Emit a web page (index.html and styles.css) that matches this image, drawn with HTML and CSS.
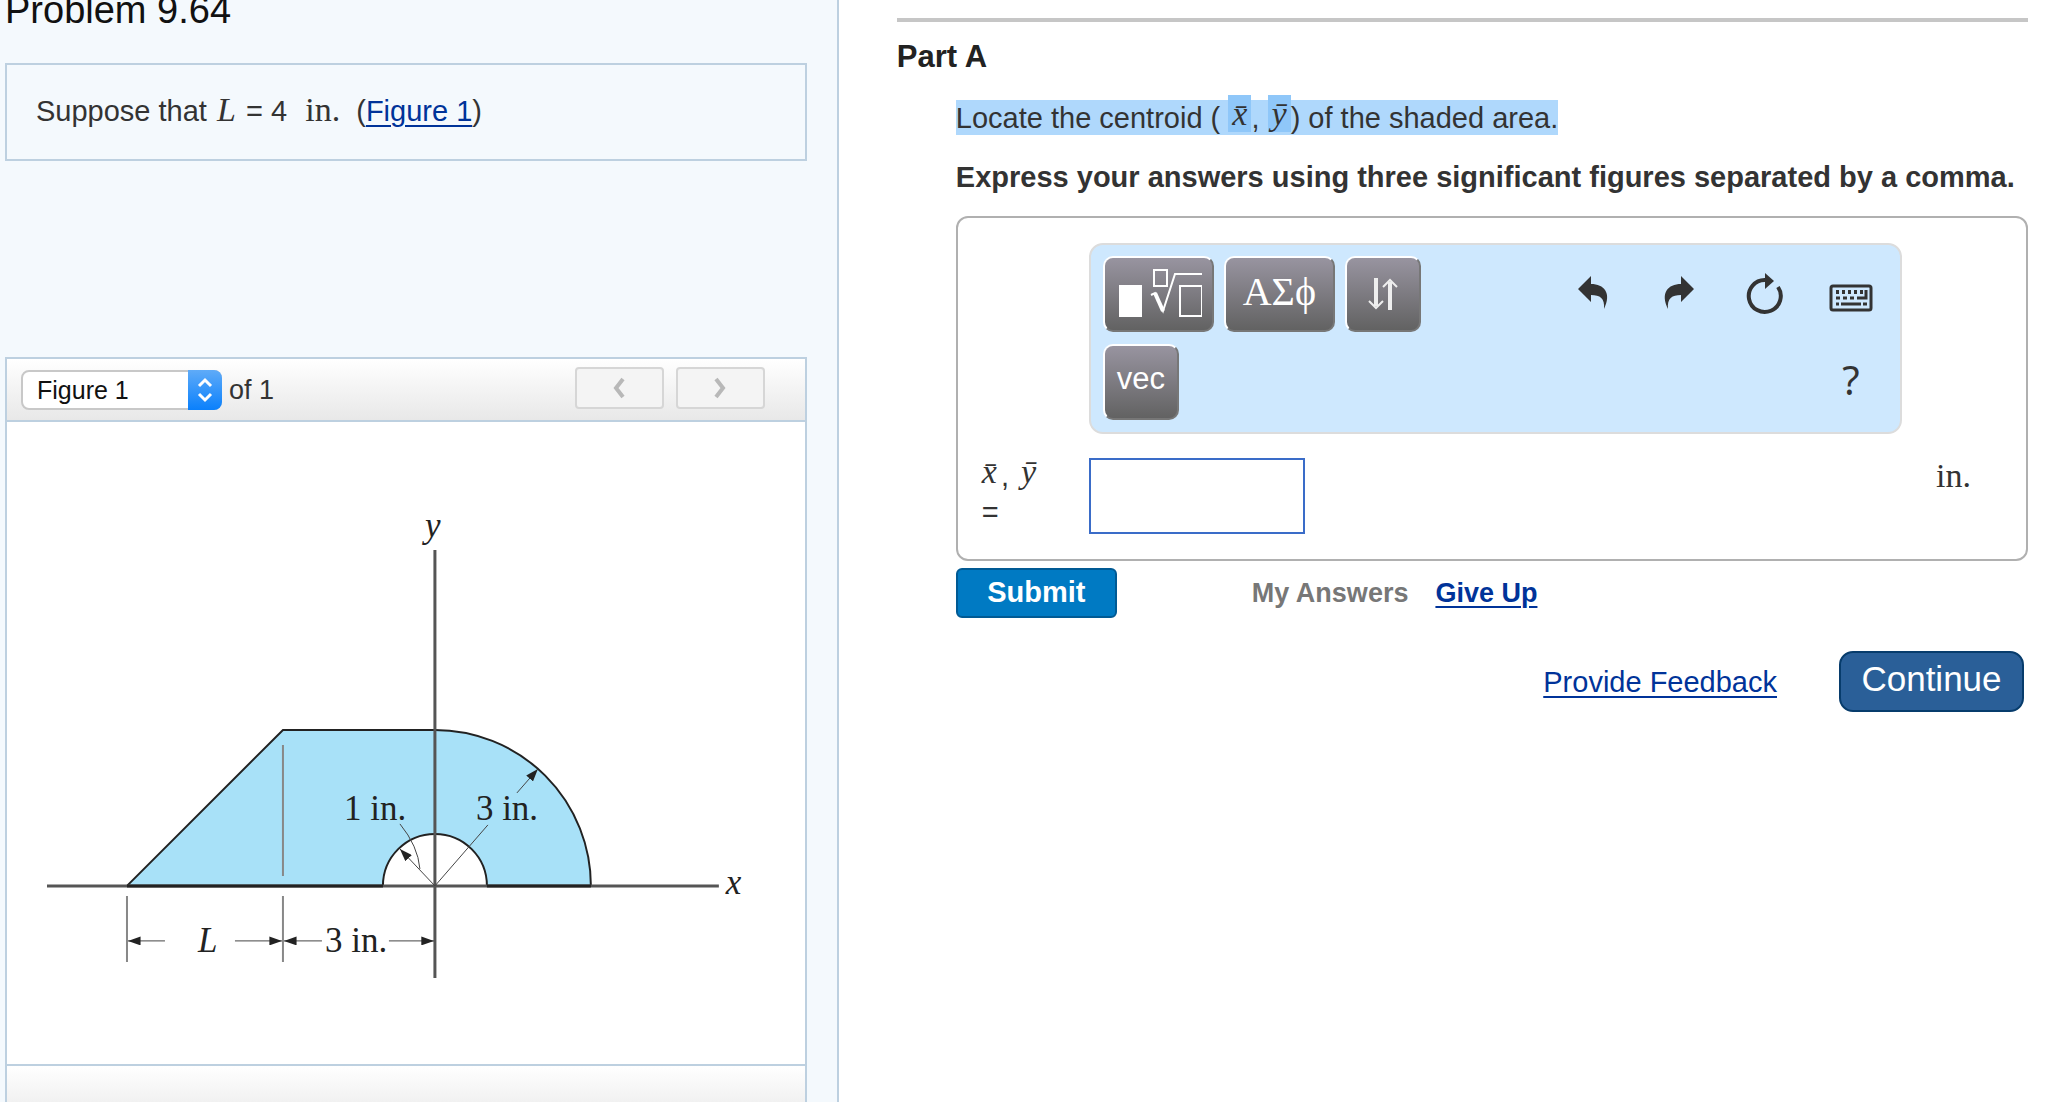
FILE: index.html
```html
<!DOCTYPE html>
<html lang="en">
<head>
    <meta charset="UTF-8">
    <meta name="viewport" content="width=device-width, initial-scale=1.0">
    <title>Problem 9.64</title>
    <link rel="stylesheet" href="styles.css">
</head>
<body>
<div class="page">

    <aside class="problem">
        <h1>Problem 9.64</h1>
        <div class="intro">
            Suppose that <i class="math">L</i> = 4&nbsp; <span class="math inches">in.</span> (<a href="#figure">Figure 1</a>)
        </div>

        <section class="figure" id="figure">
            <div class="figure-bar">
                <span class="picker">
                    <select id="figure-select" aria-label="Figure">
                        <option>Figure 1</option>
                    </select>
                    <svg class="picker-arrows" viewBox="0 0 34 40" aria-hidden="true">
                        <path d="M11 16l6-6 6 6M11 24l6 6 6-6"/>
                    </svg>
                </span>
                <label for="figure-select">of 1</label>
                <div class="pager">
                    <button type="button" aria-label="Previous figure" disabled>
                        <svg viewBox="0 0 20 24"><path d="M14 3L7 12l7 9"/></svg>
                    </button>
                    <button type="button" aria-label="Next figure" disabled>
                        <svg viewBox="0 0 20 24"><path d="M6 3l7 9-7 9"/></svg>
                    </button>
                </div>
            </div>

            <svg class="drawing" viewBox="7 422 798 642" role="img" aria-label="Shaded area with its dimensions">
                <defs>
                    <marker id="arrow" viewBox="0 0 14 10" refX="14" refY="5" markerWidth="13" markerHeight="9" markerUnits="userSpaceOnUse" orient="auto-start-reverse">
                        <path d="M0 0l14 5-14 5z" fill="#222"/>
                    </marker>
                </defs>
                <!-- shaded area -->
                <path class="area" d="M127 886L283 730H435A156 156 0 0 1 591 886H487A52 52 0 0 0 383 886Z"/>
                <!-- axes -->
                <path class="axis" d="M47 886H719M435 550V978"/>
                <path class="base" d="M127 886H383M487 886H591"/>
                <!-- guides -->
                <path class="guide" d="M283 745V876M283 896V962M127 896V962"/>
                <!-- dimensions -->
                <g class="dim">
                    <path d="M165 941H128" marker-end="url(#arrow)"/>
                    <path d="M235 941H282" marker-end="url(#arrow)"/>
                    <path d="M322 941H284" marker-end="url(#arrow)"/>
                    <path d="M389 941H434" marker-end="url(#arrow)"/>
                    <path d="M435 886L400 849" marker-end="url(#arrow)"/>
                    <path d="M517 793L538 769" marker-end="url(#arrow)"/>
                    <path d="M435 886L488 825M400 824Q418 846 420 869"/>
                </g>
                <g class="labels">
                    <text x="425" y="537" font-style="italic">y</text>
                    <text x="726" y="894" font-style="italic">x</text>
                    <text x="198" y="952" font-style="italic">L</text>
                    <text x="325" y="952">3 in.</text>
                    <text x="344" y="820">1 in.</text>
                    <text x="476" y="820">3 in.</text>
                </g>
            </svg>
            <div class="figure-foot"></div>
        </section>
    </aside>

    <main class="part">
        <h2>Part A</h2>
        <div class="content">
            <p class="question"><span class="selected">Locate the centroid ( <i class="math mean">x̄</i>, <i class="math mean">ȳ</i>) of the shaded area.</span></p>
            <p class="hint">Express your answers using three significant figures separated by a comma.</p>

            <form class="answer" id="answer-form">
                <div class="toolbar">
                    <div class="row">
                        <button type="button" class="key wide" aria-label="Templates">
                            <svg width="88" height="56" viewBox="0 0 88 56">
                                <path d="M5 19h23v32H5z" fill="#fff"/>
                                <path d="M40 4h13v16H40zM66 20h22v30H66z" fill="none" stroke="#fff" stroke-width="2"/>
                                <path d="M37 29l4-2 8 18L61 8h27" fill="none" stroke="#fff" stroke-width="2"/>
                                <path d="M41 27l8 18" stroke="#fff" stroke-width="4"/>
                            </svg>
                        </button>
                        <button type="button" class="key wide greek">ΑΣϕ</button>
                        <button type="button" class="key" aria-label="Arrows">
                            <svg width="32" height="36" viewBox="0 0 32 36" fill="none" stroke="#eee">
                                <path d="M9 2v28M23 6v28" stroke-width="4"/>
                                <path d="M2 25l7 7 7-7M16 11l7-7 7 7" stroke-width="2"/>
                            </svg>
                        </button>
                        <div class="tools">
                            <button type="button" aria-label="Undo">
                                <svg width="44" height="44" viewBox="0 0 44 44"><path d="M7 17L20 4v8c13 0 21 9 13 25 1-11-4-14-13-14v7z" fill="#333"/></svg>
                            </button>
                            <button type="button" aria-label="Redo">
                                <svg width="44" height="44" viewBox="0 0 44 44"><path d="M37 17L24 4v8C11 12 3 21 11 37c-1-11 4-14 13-14v7z" fill="#333"/></svg>
                            </button>
                            <button type="button" aria-label="Reset">
                                <svg width="44" height="44" viewBox="0 0 44 44">
                                    <path d="M35 15A16 16 0 1 1 22 8" fill="none" stroke="#333" stroke-width="4"/>
                                    <path d="M22 1l9 8-9 8z" fill="#333"/>
                                </svg>
                            </button>
                            <button type="button" aria-label="Keyboard">
                                <svg width="44" height="44" viewBox="0 0 44 44" fill="none" stroke="#333">
                                    <rect x="2" y="14" width="40" height="24" rx="2" stroke-width="3"/>
                                    <path d="M7 20h27" stroke-width="4" stroke-dasharray="3 3"/>
                                    <path d="M7 26h27" stroke-width="3" stroke-dasharray="4 3"/>
                                    <path d="M37 18v8h-5M7 32h3M12 32h20M34 32h4" stroke-width="3"/>
                                </svg>
                            </button>
                        </div>
                    </div>
                    <div class="row">
                        <button type="button" class="key">vec</button>
                        <div class="tools"><button type="button" class="help" aria-label="Help">?</button></div>
                    </div>
                </div>
                <label for="answer" class="name"><i class="math mean">x̄</i>, <i class="math mean">ȳ</i><br>=</label>
                <input type="text" id="answer">
                <span class="unit math">in.</span>
            </form>

            <div class="actions">
                <button type="submit" form="answer-form" class="submit">Submit</button>
                <span class="mine">My Answers</span>
                <a href="#">Give Up</a>
            </div>
            <div class="next">
                <a href="#">Provide Feedback</a>
                <button type="button" class="continue">Continue</button>
            </div>
        </div>
    </main>

</div>
</body>
</html>
```
FILE: styles.css
```css
* {
    box-sizing: border-box;
}

body {
    margin: 0;
    font-family: "Liberation Sans", Arial, sans-serif;
    font-size: 29px;
    line-height: 36px;
    color: #333;
    background-color: #fff;
}

button, input, select {
    font-family: inherit;
}

a {
    color: #003399;
    text-decoration-thickness: 2px;
    text-underline-offset: 4px;
}

.math {
    padding: 0 2px;
    font-family: "Liberation Serif", "Times New Roman", serif;
    font-size: 34px;
    line-height: 28px;
}

.mean {
    padding: 0 4px;
    vertical-align: 3px;
    line-height: 20px;
}

.inches {
    padding-right: 8px;
}

.page {
    display: grid;
    grid-template-columns: 41% 1fr;
    height: 100vh;
    overflow: hidden;
}

/* left side */
.problem {
    display: flex;
    flex-direction: column;
    min-height: 0;
    padding: 0 30px 0 5px;
    background-color: #f4f9fd;
    border-right: 2px solid #bdd0e0;
}

h1 {
    margin: -8px 0 35px 0;
    font-size: 38px;
    font-weight: normal;
    color: #111;
}

.intro {
    padding: 28px 29px 30px;
    margin-bottom: 196px;
    border: 2px solid #bdd0e0;
}

.figure {
    background-color: #fff;
    border: 2px solid #bdd0e0;
    border-bottom: 0;
}

.figure-bar {
    display: flex;
    align-items: center;
    gap: 7px;
    height: 63px;
    padding: 0 40px 0 14px;
    font-size: 27px;
    border-bottom: 2px solid #bdd0e0;
    background-image: linear-gradient(#fff, #e8e8e8);
}

.picker {
    position: relative;
}

.picker select {
    display: block;
    width: 201px;
    height: 40px;
    padding: 0 14px;
    appearance: none;
    font-size: 25px;
    color: #111;
    background-color: #fff;
    border: 2px solid #c8c8c8;
    border-radius: 8px;
}

.picker-arrows {
    position: absolute;
    top: 0;
    right: 0;
    width: 34px;
    height: 40px;
    border-radius: 0 8px 8px 0;
    background-image: linear-gradient(#5fabf8, #0a80fc);
    fill: none;
    stroke: #fff;
    stroke-width: 3;
    pointer-events: none;
}

.pager {
    display: flex;
    gap: 12px;
    margin-left: auto;
    margin-bottom: 4px;
}

.pager button {
    width: 89px;
    height: 42px;
    padding: 0;
    background-color: #f4f4f4;
    border: 2px solid #d6d6d6;
    border-radius: 4px;
}

.pager svg {
    display: block;
    width: 20px;
    height: 24px;
    margin: 0 auto;
    fill: none;
    stroke: #b8b8b8;
    stroke-width: 4;
}

.drawing {
    display: block;
    width: 100%;
}

.area {
    fill: #a8e1f8;
    stroke: #222;
    stroke-width: 2;
}

.axis {
    stroke: #555;
    stroke-width: 3;
}

.base {
    stroke: #222;
    stroke-width: 3;
}

.guide {
    stroke: #888;
    stroke-width: 2;
}

.dim {
    fill: none;
    stroke: #444;
    stroke-width: 1;
}

.labels {
    font-family: "Liberation Serif", "Times New Roman", serif;
    font-size: 35px;
    fill: #222;
}

.figure-foot {
    height: 62px;
    border-top: 2px solid #bdd0e0;
    background-image: linear-gradient(#fff, #e8e8e8);
}

/* right side */
.part {
    padding: 18px 18px 0 58px;
}

h2 {
    margin: 0;
    padding-top: 17px;
    font-size: 31px;
    color: #222;
    border-top: 4px solid #c6c6c6;
}

.content {
    padding: 25px 0 0 59px;
}

.question {
    margin: 0 0 23px 0;
}

.selected {
    padding: 2px 0 1px;
    background-color: #afd8fc;
}

.selected .math {
    background-color: #8fc7f9;
}

.hint {
    margin: 0 0 21px 0;
    font-size: 29px;
    font-weight: bold;
    white-space: nowrap;
}

.answer {
    display: grid;
    grid-template-columns: 107px 1fr 124px;
    row-gap: 24px;
    padding: 25px 0 25px 24px;
    border: 2px solid #b0b0b0;
    border-radius: 12px;
}

.toolbar {
    grid-column: 2;
    display: flex;
    flex-direction: column;
    gap: 12px;
    padding: 11px 6px 12px 12px;
    background-color: #cee8fe;
    border: 2px solid #dcdcdc;
    border-radius: 14px;
}

.row {
    display: flex;
    gap: 10px;
}

.key {
    display: flex;
    align-items: center;
    justify-content: center;
    width: 76px;
    height: 76px;
    padding: 0 0 6px;
    font-size: 31px;
    color: #fff;
    background-image: linear-gradient(#9894a0, #626262);
    border: 2px solid;
    border-color: #fff #777 #777 #fff;
    border-radius: 10px;
}

.key svg {
    margin-top: 6px;
}

.wide {
    width: 111px;
}

.greek {
    font-family: "Liberation Serif", serif;
    font-size: 40px;
}

.tools {
    display: flex;
    margin-left: auto;
}

.tools button {
    display: flex;
    align-items: center;
    justify-content: center;
    width: 86px;
    height: 76px;
    padding: 0;
    color: #333;
    background: none;
    border: 0;
}

.tools .help {
    padding-bottom: 6px;
    font-family: "Noto Sans", sans-serif;
    font-size: 40px;
}

.name {
    grid-column: 1;
}

.name .mean:first-child {
    padding-left: 0;
}

.answer input {
    width: 216px;
    height: 76px;
    padding: 0 12px;
    font-size: 29px;
    border: 2px solid #3a6cc8;
}

.unit {
    padding: 4px 0 0 34px;
}

.actions {
    display: flex;
    align-items: center;
    margin-top: 7px;
    font-size: 27px;
    font-weight: bold;
}

.submit {
    width: 161px;
    height: 50px;
    padding: 0 0 2px;
    margin-right: 135px;
    font-size: 29px;
    font-weight: bold;
    color: #fff;
    background-color: #007ac3;
    border: 2px solid #005a94;
    border-radius: 6px;
}

.mine {
    margin-right: 27px;
    color: #777;
}

.next {
    display: flex;
    align-items: center;
    justify-content: flex-end;
    gap: 62px;
    margin-top: 33px;
    padding-right: 4px;
}

.continue {
    width: 185px;
    height: 61px;
    padding: 0 0 6px;
    font-size: 35px;
    color: #fff;
    background-color: #2a5f98;
    border: 2px solid #073c6c;
    border-radius: 14px;
}
```
